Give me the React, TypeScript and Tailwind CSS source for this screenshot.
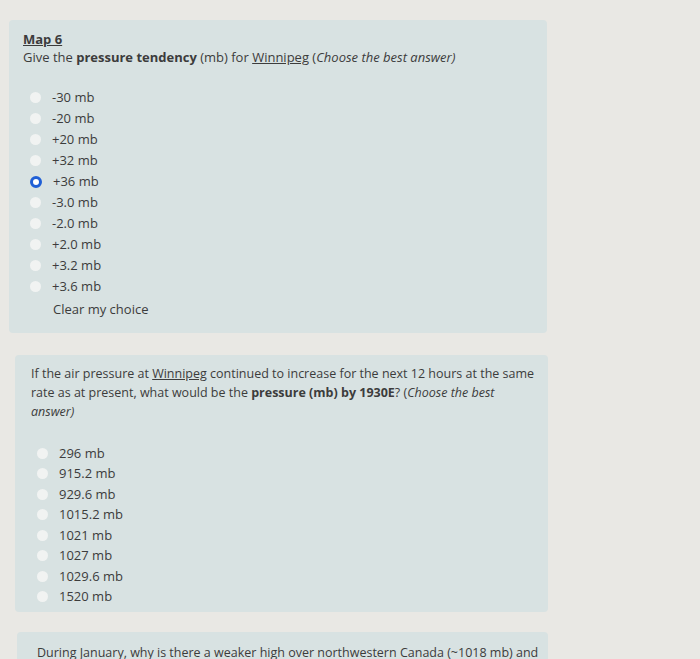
import React from "react";

type Option = { label: string; checked?: boolean };

const mapOptions: Option[] = [
  { label: "-30 mb" },
  { label: "-20 mb" },
  { label: "+20 mb" },
  { label: "+32 mb" },
  { label: "+36 mb", checked: true },
  { label: "-3.0 mb" },
  { label: "-2.0 mb" },
  { label: "+2.0 mb" },
  { label: "+3.2 mb" },
  { label: "+3.6 mb" },
];

const pressureOptions: Option[] = [
  { label: "296 mb" },
  { label: "915.2 mb" },
  { label: "929.6 mb" },
  { label: "1015.2 mb" },
  { label: "1021 mb" },
  { label: "1027 mb" },
  { label: "1029.6 mb" },
  { label: "1520 mb" },
];

const Radio: React.FC<{ checked?: boolean }> = ({ checked }) =>
  checked ? (
    <span className="w-[12px] h-[12px] rounded-full border-[3px] border-[#1f5fd6] bg-white shrink-0" />
  ) : (
    <span className="w-[11px] h-[11px] rounded-full bg-[#f1f3f2] shrink-0" />
  );

const OptionList: React.FC<{ options: Option[]; rowClass: string }> = ({
  options,
  rowClass,
}) => (
  <ul className="flex flex-col">
    {options.map((o) => (
      <li key={o.label} className={`flex items-center gap-[11px] ${rowClass}`}>
        <Radio checked={o.checked} />
        <span>{o.label}</span>
      </li>
    ))}
  </ul>
);

export default function App() {
  return (
    <div
      className="h-[659px] bg-[#e9e8e4] pt-[20px] text-[13px] text-[#3c3c3c] overflow-hidden"
      style={{ fontFamily: '"Open Sans", "Liberation Sans", sans-serif' }}
    >
      {/* question 1 */}
      <section className="ml-[9px] w-[538px] h-[313px] rounded-[4px] bg-[#d8e2e2] pl-[14px] pt-[10px]">
        <h2 className="font-bold underline leading-[18px]">Map 6</h2>
        <p className="leading-[19px]">
          Give the <b>pressure tendency</b> (mb) for{" "}
          <span className="underline">Winnipeg</span> (<i>Choose the best answer)</i>
        </p>
        <div className="mt-[20px] pl-[7px]">
          <OptionList options={mapOptions} rowClass="h-[21px]" />
          <button className="mt-[2px] ml-[23px] h-[22px] text-[#3c3c3c]">
            Clear my choice
          </button>
        </div>
      </section>

      {/* question 2 */}
      <section className="mt-[22px] ml-[15px] w-[533px] h-[257px] rounded-[4px] bg-[#d8e2e2] pl-[16px] pt-[9px]">
        <p className="leading-[19px] w-[515px] text-[12.5px]">
          If the air pressure at <span className="underline">Winnipeg</span>{" "}
          continued to increase for the next 12 hours at the same
          <br />
          rate as at present, what would be the <b>pressure (mb) by 1930E</b>? (
          <i>Choose the best</i>
          <br />
          <i>answer)</i>
        </p>
        <div className="mt-[22px] pl-[6px]">
          <OptionList options={pressureOptions} rowClass="h-[20.5px]" />
        </div>
      </section>

      {/* question 3, runs on below the fold */}
      <section className="mt-[20px] ml-[17px] w-[531px] h-[60px] rounded-t-[4px] bg-[#d8e2e2] pl-[20px] pt-[11px]">
        <p className="leading-[19px] text-[12.5px]">
          During January, why is there a weaker high over northwestern Canada
          (~1018 mb) and
        </p>
      </section>
    </div>
  );
}
